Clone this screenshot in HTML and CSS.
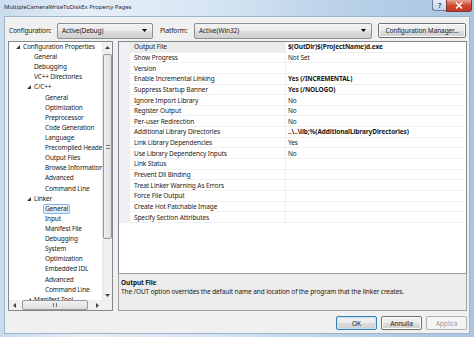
FILE: index.html
```html
<!DOCTYPE html>
<html>
<head>
<meta charset="utf-8">
<link rel="stylesheet" href="styles.css">
</head>
<body>
<div class="window">
  <div class="titlebar">
    <span class="title">MultipleCameraWriteToDiskEx Property Pages</span>
    <div class="caption">
      <div class="cap help">?</div>
      <div class="cap close"><svg width="8" height="7" viewBox="0 0 8 7"><path d="M1 0.5 L7 6.5 M7 0.5 L1 6.5" stroke="#fff" stroke-width="1.6"/></svg></div>
    </div>
  </div>
  <div class="client">
    <div class="toprow">
      <span class="lbl cfglbl">Configuration:</span>
      <div class="combo cfg"><span>Active(Debug)</span><svg class="dd" width="5" height="3" viewBox="0 0 5 3"><path d="M0 0H5L2.5 3Z" fill="#000"/></svg></div>
      <span class="lbl plat">Platform:</span>
      <div class="combo platc"><span>Active(Win32)</span><svg class="dd" width="5" height="3" viewBox="0 0 5 3"><path d="M0 0H5L2.5 3Z" fill="#000"/></svg></div>
      <div class="btn cm">Configuration Manager...</div>
    </div>
    <div class="main">
      <div class="tree">
        <div class="tree-view">
          <div class="tree-items">
            <div class="ti l1"><svg class="tri" width="4" height="4" viewBox="0 0 4 4"><path d="M4 0V4H0Z" fill="#333"/></svg>Configuration Properties</div>
            <div class="ti l2">General</div>
            <div class="ti l2">Debugging</div>
            <div class="ti l2">VC++ Directories</div>
            <div class="ti l2"><svg class="tri" width="4" height="4" viewBox="0 0 4 4"><path d="M4 0V4H0Z" fill="#333"/></svg>C/C++</div>
            <div class="ti l3">General</div>
            <div class="ti l3">Optimization</div>
            <div class="ti l3">Preprocessor</div>
            <div class="ti l3">Code Generation</div>
            <div class="ti l3">Language</div>
            <div class="ti l3">Precompiled Headers</div>
            <div class="ti l3">Output Files</div>
            <div class="ti l3">Browse Information</div>
            <div class="ti l3">Advanced</div>
            <div class="ti l3">Command Line</div>
            <div class="ti l2"><svg class="tri" width="4" height="4" viewBox="0 0 4 4"><path d="M4 0V4H0Z" fill="#333"/></svg>Linker</div>
            <div class="ti l3"><span class="sel">General</span></div>
            <div class="ti l3">Input</div>
            <div class="ti l3">Manifest File</div>
            <div class="ti l3">Debugging</div>
            <div class="ti l3">System</div>
            <div class="ti l3">Optimization</div>
            <div class="ti l3">Embedded IDL</div>
            <div class="ti l3">Advanced</div>
            <div class="ti l3">Command Line</div>
            <div class="ti l2"><svg class="tri" width="4" height="4" viewBox="0 0 4 4"><path d="M4 0V4H0Z" fill="#333"/></svg>Manifest Tool</div>
          </div>
          <div class="vscroll">
            <div class="arrow"><svg width="5" height="3" viewBox="0 0 5 3"><path d="M0 3H5L2.5 0Z" fill="#444"/></svg></div>
            <div class="vtrack">
              <div class="vthumb"><span class="grip-h"></span></div>
            </div>
            <div class="arrow"><svg width="5" height="3" viewBox="0 0 5 3"><path d="M0 0H5L2.5 3Z" fill="#444"/></svg></div>
          </div>
        </div>
        <div class="hscroll">
          <div class="harrow"><svg width="3" height="5" viewBox="0 0 3 5"><path d="M3 0V5L0 2.5Z" fill="#444"/></svg></div>
          <div class="htrack"><div class="hthumb"><span class="grip-v"></span></div></div>
          <div class="harrow"><svg width="3" height="5" viewBox="0 0 3 5"><path d="M0 0V5L3 2.5Z" fill="#444"/></svg></div>
          <div class="corner"></div>
        </div>
      </div>
      <div class="right">
        <div class="grid">
          <div class="row selrow"><span class="m"></span><span class="n">Output File</span><span class="v b">$(OutDir)$(ProjectName)d.exe</span></div>
          <div class="row"><span class="m"></span><span class="n">Show Progress</span><span class="v">Not Set</span></div>
          <div class="row"><span class="m"></span><span class="n">Version</span><span class="v"></span></div>
          <div class="row"><span class="m"></span><span class="n">Enable Incremental Linking</span><span class="v b">Yes (/INCREMENTAL)</span></div>
          <div class="row"><span class="m"></span><span class="n">Suppress Startup Banner</span><span class="v b">Yes (/NOLOGO)</span></div>
          <div class="row"><span class="m"></span><span class="n">Ignore Import Library</span><span class="v">No</span></div>
          <div class="row"><span class="m"></span><span class="n">Register Output</span><span class="v">No</span></div>
          <div class="row"><span class="m"></span><span class="n">Per-user Redirection</span><span class="v">No</span></div>
          <div class="row"><span class="m"></span><span class="n">Additional Library Directories</span><span class="v b">..\..\lib;%(AdditionalLibraryDirectories)</span></div>
          <div class="row"><span class="m"></span><span class="n">Link Library Dependencies</span><span class="v">Yes</span></div>
          <div class="row"><span class="m"></span><span class="n">Use Library Dependency Inputs</span><span class="v">No</span></div>
          <div class="row"><span class="m"></span><span class="n">Link Status</span><span class="v"></span></div>
          <div class="row"><span class="m"></span><span class="n">Prevent Dll Binding</span><span class="v"></span></div>
          <div class="row"><span class="m"></span><span class="n">Treat Linker Warning As Errors</span><span class="v"></span></div>
          <div class="row"><span class="m"></span><span class="n">Force File Output</span><span class="v"></span></div>
          <div class="row"><span class="m"></span><span class="n">Create Hot Patchable Image</span><span class="v"></span></div>
          <div class="row"><span class="m"></span><span class="n">Specify Section Attributes</span><span class="v"></span></div>
        </div>
        <div class="desc">
          <div class="dtitle">Output File</div>
          <div class="dtext">The /OUT option overrides the default name and location of the program that the linker creates.</div>
        </div>
      </div>
    </div>
    <div class="buttons">
      <div class="btn def">OK</div>
      <div class="btn">Annulla</div>
      <div class="btn dis">Applica</div>
    </div>
  </div>
</div>
</body>
</html>
```
FILE: styles.css
```css
* { box-sizing: border-box; }
html, body { margin: 0; padding: 0; }
body {
  width: 474px; height: 337px; overflow: hidden;
  font-family: "Noto Sans", "Open Sans", sans-serif;
  font-size: 6.5px;
  letter-spacing: -0.1px;
  color: #1a1a1a;
}
.window {
  width: 474px; height: 337px;
  display: flex; flex-direction: column;
  background: linear-gradient(90deg, #c9dbed 0%, #e6eff8 18%, #d6e5f3 45%, #b7cfe7 75%, #abc5e0 100%);
}
.titlebar {
  height: 16px; flex: none;
  display: flex; align-items: flex-start;
  padding-left: 4px;
}
.title { font-size: 6.1px; line-height: 14px; color: #1e2a38; }
.caption { margin-left: auto; margin-right: 2px; display: flex; }
.cap {
  height: 11px; display: flex; align-items: center; justify-content: center;
  border: 1px solid #6d7f95; border-top: none;
}
.help {
  width: 14px; border-radius: 0 0 0 3px; border-right: none;
  background: linear-gradient(#e6eef7, #c2d4e8);
  color: #3a4a5e; font-size: 7px; font-weight: bold;
}
.close {
  width: 26px; height: 12px; border-radius: 0 0 3px 0;
  background: linear-gradient(#e8a493, #d0472e 50%, #c23a22);
  border-color: #7a3a30;
}
.client {
  flex: 1;
  margin: 0 4px 3px 4px;
  background: #f0f0f0;
  border: 1px solid #9fb3c8;
  display: flex; flex-direction: column;
  padding: 5px 2px 0 3px;
}
.toprow { height: 17px; display: flex; align-items: center; flex: none; }
.lbl { white-space: nowrap; }
.cfglbl { width: 49px; padding-left: 1px; }
.combo {
  height: 16px; border: 1px solid #8e8f8f; border-radius: 2px;
  background: linear-gradient(#f2f2f2 0%, #ebebeb 50%, #dddddd 51%, #cfcfcf 100%);
  display: flex; align-items: center; padding-left: 4px;
}
.combo .dd { margin-left: auto; margin-right: 5px; }
.cfg { width: 96px; }
.plat { width: 41px; padding-left: 7px; }
.platc { width: 178px; }
.btn {
  height: 14px; border: 1px solid #707070; border-radius: 2px;
  background: linear-gradient(#f2f2f2 0%, #ebebeb 50%, #dddddd 51%, #cfcfcf 100%);
  display: flex; align-items: center; justify-content: center;
  box-shadow: inset 0 0 0 1px #fcfcfc;
  white-space: nowrap;
}
.cm { margin-left: 6px; width: 88px; height: 15px; }
.main { display: flex; flex: none; height: 270px; margin-top: 2px; }
.tree {
  width: 105px; height: 270px; border: 1px solid #828790; background: #fff;
  display: flex; flex-direction: column;
}
.tree-view { flex: 1; display: flex; min-height: 0; }
.tree-items { flex: 1; overflow: hidden; white-space: nowrap; letter-spacing: -0.15px; }
.ti { height: 10.12px; line-height: 10.12px; display: flex; align-items: center; }
.l1 { padding-left: 14px; }
.l2 { padding-left: 25px; }
.l3 { padding-left: 36px; }
.tri { margin-left: -7px; margin-right: 3px; flex: none; }
.sel {
  border: 1px solid #7eb4ea; border-radius: 2px;
  background: linear-gradient(#f2f8fd, #dcebfc);
  padding: 0 1px; margin-left: -2px; line-height: 8px;
}
.vscroll {
  width: 10px; display: flex; flex-direction: column; flex: none;
  background: #f0f0f0; border-left: 1px solid #e6e6e6;
}
.arrow { height: 10px; display: flex; align-items: center; justify-content: center; }
.vtrack { flex: 1; padding-top: 2px; }
.vthumb {
  height: 185px; border: 1px solid #979797; border-radius: 2px;
  background: linear-gradient(90deg, #f1f1f1, #dedede);
  display: flex; align-items: center; justify-content: center;
}
.grip-h { width: 4px; height: 4px; border-top: 1px solid #777; border-bottom: 1px solid #777; }
.grip-v { width: 4px; height: 4px; border-left: 1px solid #777; border-right: 1px solid #777; }
.hscroll { height: 10px; display: flex; background: #f0f0f0; flex: none; }
.harrow { width: 10px; display: flex; align-items: center; justify-content: center; }
.htrack { flex: 1; padding: 0 1px; }
.hthumb {
  width: 66px; height: 10px; margin-left: 2px; border: 1px solid #979797; border-radius: 2px;
  background: linear-gradient(#f1f1f1, #dedede);
  display: flex; align-items: center; justify-content: center;
}
.corner { width: 10px; background: #f0f0f0; }
.right { width: 349px; margin-left: 5px; display: flex; flex-direction: column; }
.grid {
  height: 233px; flex: none; background: #fff;
  border: 1px solid #828790; border-bottom: 1px solid #a0a0a0;
}
.row { display: flex; height: 10.65px; border-bottom: 1px solid #f0f0f0; align-items: center; white-space: nowrap; }
.row .m { width: 11px; height: 100%; background: #f0f0f0; flex: none; }
.row .n { width: 156px; padding-left: 4px; height: 100%; display: flex; align-items: center; border-right: 1px solid #f0f0f0; flex: none; }
.row .v { padding-left: 2px; }
.row .b { font-weight: bold; }
.selrow .n { background: #ececec; }
.desc {
  height: 37px; flex: none; background: #ececec;
  border: 1px solid #a0a0a0; border-top: none;
  padding: 4px 0 0 2px;
}
.dtitle { font-weight: bold; line-height: 9px; }
.dtext { line-height: 10px; }
.buttons { display: flex; justify-content: flex-end; gap: 4px; margin-top: 5px; }
.buttons .btn { width: 41px; height: 14px; }
.def { border-color: #3c7fb1; box-shadow: inset 0 0 0 1px #bfe3f7; }
.dis { color: #a0a0a0; border-color: #adb2b5; background: #f4f4f4; box-shadow: none; }
```
